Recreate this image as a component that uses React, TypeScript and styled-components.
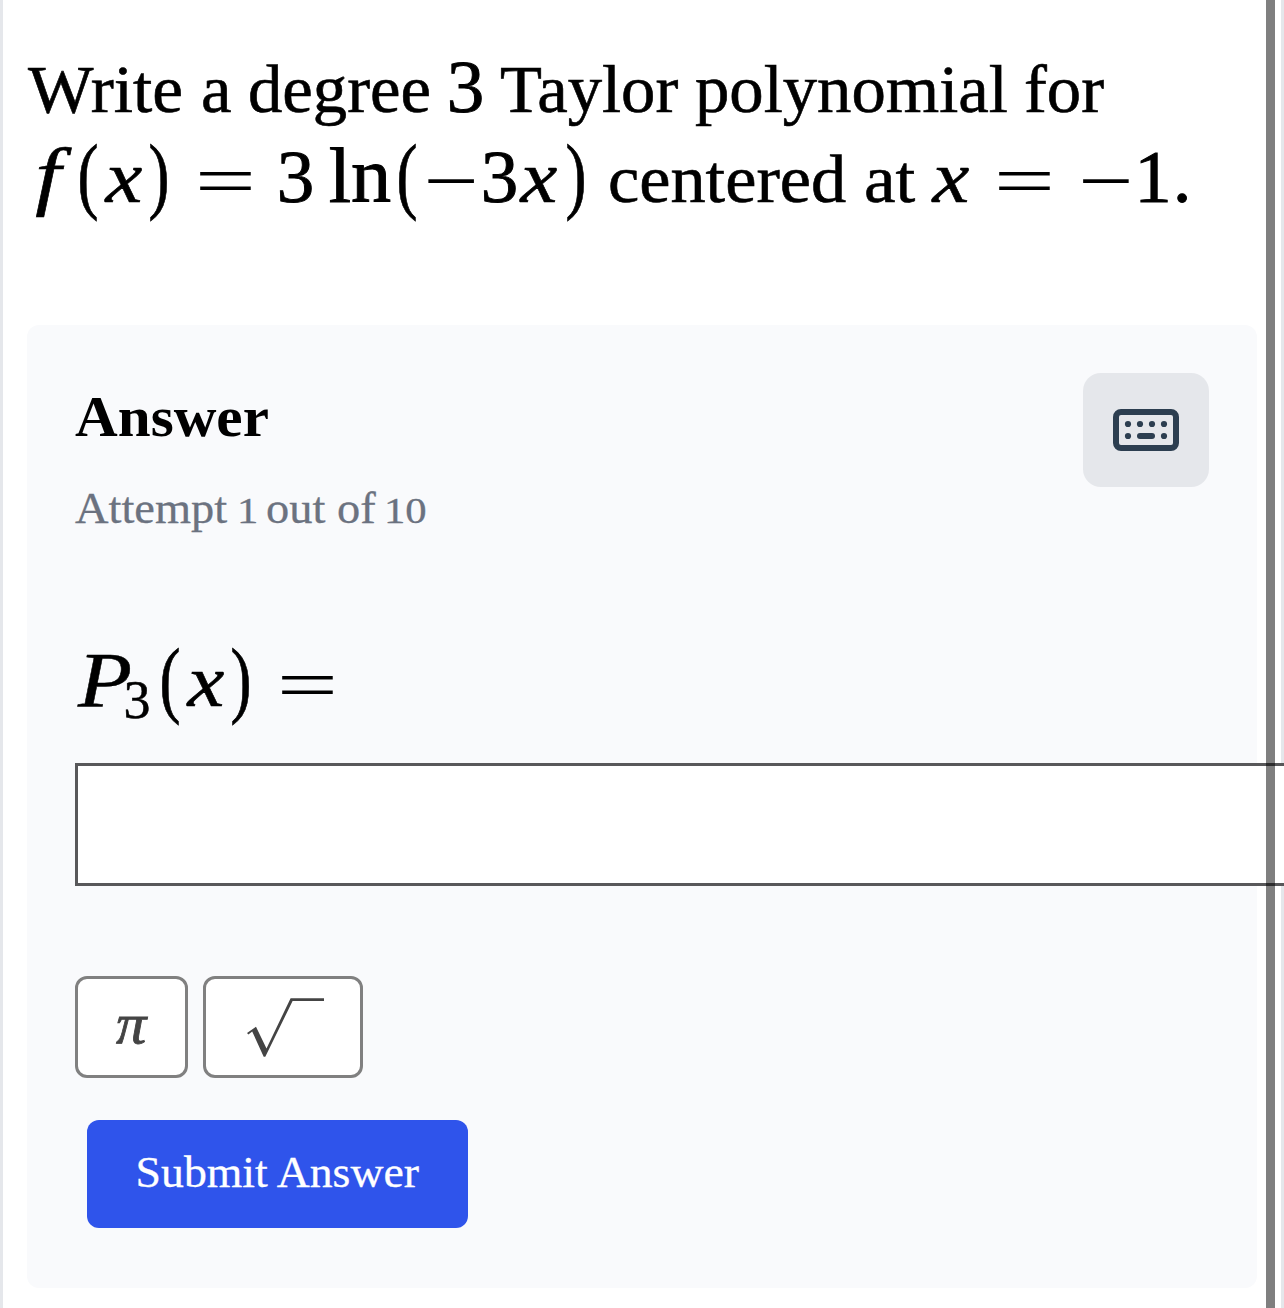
import React from 'react';
import styled, { createGlobalStyle } from 'styled-components';

const GlobalStyle = createGlobalStyle`
  * { box-sizing: border-box; }
  body {
    margin: 0;
    overflow: hidden;
    background: #fff;
    color: #000;
    font-family: "Liberation Serif", Georgia, serif;
  }
`;

const Page = styled.main`
  position: relative;
  width: 1284px;
  height: 1308px;
  padding: 40px 24px 0;
  border-left: 3px solid #e5e7eb;
  border-right: 3px solid #e5e7eb;
`;

const ScrollThumb = styled.div`
  position: absolute;
  top: 0;
  bottom: 0;
  right: 6px;
  width: 9px;
  background: rgba(0, 0, 0, 0.5);
`;

/* A text line whose baseline sits exactly $base below its top edge. */
const Line = styled.div<{ $base: number; $height: number }>`
  display: flex;
  align-items: baseline;
  height: ${p => p.$height}px;
  line-height: 0;
  white-space: nowrap;
  &::before {
    content: '';
    width: 0;
    height: ${p => p.$base}px;
  }
`;

const Word = styled.span<{ $gap?: number; $w: number; $sx?: number }>`
  flex: none;
  margin-left: ${p => p.$gap ?? 0}px;
  width: ${p => p.$w}px;
  font-size: 67px;
  -webkit-text-stroke: 0.6px currentColor;
  transform: scaleX(${p => p.$sx ?? 1.025});
  transform-origin: left;
`;

const Glyph = styled.span<{
  $gap?: number; $w: number; $size?: number; $sx?: number; $dx?: number; $dy?: number; $italic?: boolean;
  $stroke?: number;
}>`
  flex: none;
  display: flex;
  justify-content: center;
  margin-left: ${p => p.$gap ?? 0}px;
  width: ${p => p.$w}px;
  font-size: ${p => p.$size ?? 75}px;
  font-style: ${p => (p.$italic ? 'italic' : 'normal')};
  -webkit-text-stroke: ${p => p.$stroke ?? 0.9}px currentColor;
  transform: translate(${p => p.$dx ?? 0}px, ${p => p.$dy ?? 0}px) scaleX(${p => p.$sx ?? 1});
`;

type G = { gap: number };
const Open = ({ gap }: G) => <Glyph $gap={gap} $w={18} $size={85} $sx={0.74} $dx={0} $dy={1} $stroke={0.8}>(</Glyph>;
const Close = ({ gap }: G) => <Glyph $gap={gap} $w={18} $size={85} $sx={0.74} $dx={0} $dy={1} $stroke={0.8}>)</Glyph>;
const Equals = ({ gap }: G) => <Glyph $gap={gap} $w={51} $size={72} $sx={1.51} $dy={3} $stroke={0}>=</Glyph>;
const Minus = ({ gap }: G) => <Glyph $gap={gap} $w={46} $size={72} $sx={1.36} $dy={3} $stroke={0}>−</Glyph>;
const VarX = ({ gap }: G) => <Glyph $gap={gap} $w={38} $size={74} $sx={1.12} $stroke={0.6} $italic>x</Glyph>;

const Panel = styled.section`
  width: 1230px;
  height: 963px;
  margin-top: 105px;
  padding: 48px 48px 60px;
  border-radius: 12px;
  background: #f9fafc;
`;

const Header = styled.header`
  display: flex;
  justify-content: space-between;
  align-items: flex-start;
  height: 180px;
`;

const Title = styled.span`
  font-size: 58px;
  font-weight: 700;
  transform: scaleX(1.02);
  transform-origin: left;
`;

const Note = styled.span<{ $w: number; $gap?: number }>`
  flex: none;
  width: ${p => p.$w}px;
  margin-left: ${p => p.$gap ?? 0}px;
  font-size: 44px;
  color: #6b7280;
  -webkit-text-stroke: 0.3px currentColor;
  transform: scaleX(1.055);
  transform-origin: left;
`;

const OldNumeral = styled(Note)`
  font-size: 35px;
  transform: scaleX(1.22);
`;

const KeyboardButton = styled.button`
  display: flex;
  align-items: center;
  justify-content: center;
  width: 126px;
  height: 114px;
  padding: 0;
  border: 0;
  border-radius: 18px;
  background: #e5e7eb;
`;

const Formula = styled(Line)`
  margin-top: 77px;
  padding-left: 3px;
`;

/* Open on the right: the field runs out past the pane. */
const MathField = styled.div`
  width: 1209px;
  height: 123px;
  border: 3px solid #58585a;
  border-right: 0;
  background: #fff;
`;

const Keys = styled.div`
  display: flex;
  gap: 15px;
  margin-top: 90px;
`;

const Key = styled.button<{ $w: number }>`
  display: flex;
  align-items: center;
  justify-content: center;
  width: ${p => p.$w}px;
  height: 102px;
  padding: 0;
  border: 3px solid #808080;
  border-radius: 12px;
  background: #fff;
  color: #444;
`;

const KeySymbol = styled.span`
  font: italic 56px/1 "Liberation Serif", serif;
  -webkit-text-stroke: 0.8px currentColor;
  transform: translate(0, -3px) scaleX(1.08);
`;

const Submit = styled.button`
  display: flex;
  align-items: center;
  justify-content: center;
  width: 381px;
  height: 108px;
  margin: 42px 0 0 12px;
  padding: 0 0 3px;
  border: 0;
  border-radius: 12px;
  background: #2f54eb;
  color: #fff;
  font: 44px/1 "Liberation Serif", serif;
`;

const SubmitLabel = styled.span`
  -webkit-text-stroke: 0.3px currentColor;
  transform: scaleX(1.04);
`;

const KeyboardIcon = () => (
  <svg width="66" height="42" viewBox="0 0 66 42" fill="#2c3e50">
    <rect x="3" y="3" width="60" height="36" rx="5" fill="none" stroke="#2c3e50" strokeWidth="6" />
    {[15, 27, 39, 51].map(x => <circle key={x} cx={x} cy="15" r="3.1" />)}
    <circle cx="15" cy="27" r="3.1" />
    <rect x="24" y="24" width="18" height="6" rx="3" />
    <circle cx="51" cy="27" r="3.1" />
  </svg>
);

const RootIcon = () => (
  <svg width="154" height="96" viewBox="0 0 154 96" fill="#444">
    <path d="M41 54 L50 47.7 L60.5 69.5 L84.6 19.2 H118 V22 H86.6 L59.3 77.8 H57.7 L46.2 52.5 L42.4 55.4 Z" />
  </svg>
);

export default function App() {
  return (
    <Page>
      <GlobalStyle />
      <Line $base={72} $height={90}>
        <Word $w={156} $gap={1} $sx={1.035}>Write</Word>
        <Word $w={29} $gap={17}>a</Word>
        <Word $w={182} $gap={18}>degree</Word>
        <Glyph $w={33} $gap={19}>3</Glyph>
        <Word $w={178} $gap={18}>Taylor</Word>
        <Word $w={312} $gap={17}>polynomial</Word>
        <Word $w={80} $gap={17}>for</Word>
      </Line>
      <Line $base={72} $height={90}>
        <Glyph $w={38} $gap={4} $size={77} $sx={1.2} $dx={-2} $dy={-1} $stroke={0.6} $italic>f</Glyph>
        <Open gap={10} />
        <VarX gap={8} />
        <Close gap={7} />
        <Equals gap={32} />
        <Glyph $w={33} $gap={28}>3</Glyph>
        <Glyph $w={62} $gap={17} $size={78} $sx={1.03}>ln</Glyph>
        <Open gap={7} />
        <Minus gap={12} />
        <Glyph $w={33} $gap={9}>3</Glyph>
        <VarX gap={4} />
        <Close gap={9} />
        <Word $w={237} $gap={23} $sx={1.05}>centered</Word>
        <Word $w={51} $gap={19} $sx={1.06}>at</Word>
        <VarX gap={17} />
        <Equals gap={29} />
        <Minus gap={33} />
        <Glyph $w={28} $gap={10}>1</Glyph>
        <Glyph $w={10} $gap={10}>.</Glyph>
      </Line>

      <Panel>
        <Header>
          <div>
            <Line $base={63} $height={90}><Title>Answer</Title></Line>
            <Line $base={60} $height={90}>
              <Note $w={152}>Attempt</Note>
              <OldNumeral $w={16} $gap={10}>1</OldNumeral>
              <Note $w={60} $gap={13}>out</Note>
              <Note $w={38} $gap={11}>of</Note>
              <OldNumeral $w={40} $gap={9}>10</OldNumeral>
            </Line>
          </div>
          <KeyboardButton aria-label="Keyboard"><KeyboardIcon /></KeyboardButton>
        </Header>
        <Formula $base={76} $height={133}>
          <Glyph $w={54} $size={79} $sx={1.12} $stroke={0.5} $italic>P</Glyph>
          <Glyph $w={24} $gap={-8} $size={54} $dx={1} $dy={12} $stroke={0.5}>3</Glyph>
          <Open gap={13} />
          <VarX gap={8} />
          <Close gap={7} />
          <Equals gap={32} />
        </Formula>
        <MathField />
        <Keys>
          <Key $w={113}><KeySymbol>π</KeySymbol></Key>
          <Key $w={160}><RootIcon /></Key>
        </Keys>
        <Submit><SubmitLabel>Submit Answer</SubmitLabel></Submit>
      </Panel>
      <ScrollThumb />
    </Page>
  );
}
